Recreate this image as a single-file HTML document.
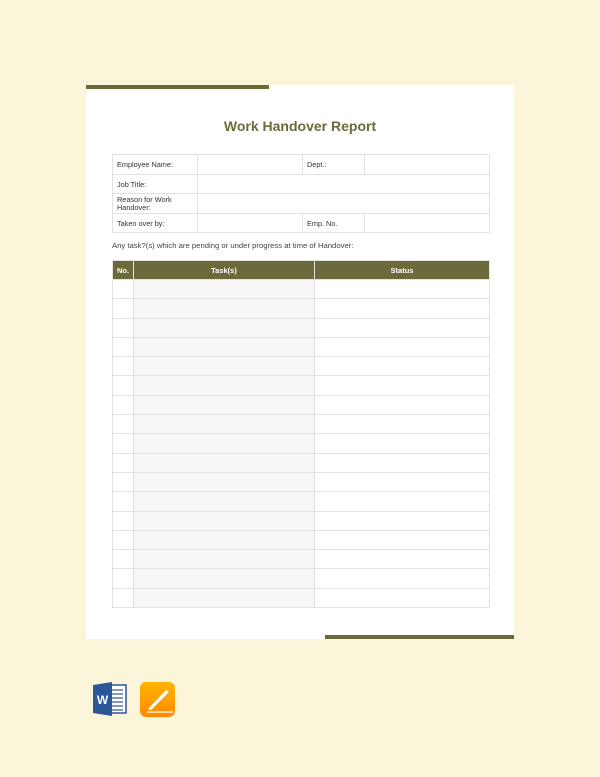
<!DOCTYPE html>
<html><head><style>
body{margin:0;width:600px;height:777px;background:#fbf6da;position:relative;font-family:"Liberation Sans",sans-serif;overflow:hidden}
.page{position:absolute;left:86px;top:85px;width:428px;height:554px;background:#fff}
.bar{position:absolute;background:#6b6a3a;height:4px}
h1{position:absolute;left:0;width:100%;top:118px;margin:0;text-align:center;font-size:14px;color:#6b6a3a;font-weight:bold}
table{border-collapse:collapse;position:absolute;font-size:7.3px;color:#333}
td{border:1px solid #e2e2e2;padding:0 4px;vertical-align:middle}
.t2 th{background:#6b6a3a;color:#fff;font-size:7.5px;border:1px solid #e2e2e2;height:18px;padding:0}
.t2 td{height:18.3px;padding:0}
.t2 td.g{background:#f6f6f6}
.note{position:absolute;left:112px;top:241px;font-size:7.7px;color:#444}
</style></head><body>
<div class="page"></div>
<div class="bar" style="left:86px;top:85px;width:183px"></div>
<div class="bar" style="left:325px;top:635px;width:189px"></div>
<h1>Work Handover Report</h1>
<table style="left:112px;top:154px;width:378px">
<tr style="height:20px"><td style="width:76px">Employee Name:</td><td style="width:96px"></td><td style="width:53px">Dept.:</td><td></td></tr>
<tr style="height:19px"><td>Job Title:</td><td colspan="3"></td></tr>
<tr style="height:20px"><td style="line-height:8px">Reason for Work Handover:</td><td colspan="3"></td></tr>
<tr style="height:19px"><td>Taken over by:</td><td></td><td>Emp. No.</td><td></td></tr>
</table>
<div class="note">Any task?(s) which are pending or under progress at time of Handover:</div>
<table class="t2" style="left:112px;top:260px;width:378px">
<tr><th style="width:20px">No.</th><th style="width:180px">Task(s)</th><th>Status</th></tr>
<tr><td></td><td class="g"></td><td></td></tr>
<tr><td></td><td class="g"></td><td></td></tr>
<tr><td></td><td class="g"></td><td></td></tr>
<tr><td></td><td class="g"></td><td></td></tr>
<tr><td></td><td class="g"></td><td></td></tr>
<tr><td></td><td class="g"></td><td></td></tr>
<tr><td></td><td class="g"></td><td></td></tr>
<tr><td></td><td class="g"></td><td></td></tr>
<tr><td></td><td class="g"></td><td></td></tr>
<tr><td></td><td class="g"></td><td></td></tr>
<tr><td></td><td class="g"></td><td></td></tr>
<tr><td></td><td class="g"></td><td></td></tr>
<tr><td></td><td class="g"></td><td></td></tr>
<tr><td></td><td class="g"></td><td></td></tr>
<tr><td></td><td class="g"></td><td></td></tr>
<tr><td></td><td class="g"></td><td></td></tr>
<tr><td></td><td class="g"></td><td></td></tr>
</table>
<svg style="position:absolute;left:92px;top:681px" width="36" height="36" viewBox="0 0 36 36">
<rect x="12" y="4" width="22" height="28" fill="#fff" stroke="#2b5797" stroke-width="1.5"/>
<g stroke="#2b5797" stroke-width="1.2"><line x1="20" y1="9" x2="31" y2="9"/><line x1="20" y1="13" x2="31" y2="13"/><line x1="20" y1="17" x2="31" y2="17"/><line x1="20" y1="21" x2="31" y2="21"/><line x1="20" y1="25" x2="31" y2="25"/><line x1="20" y1="29" x2="31" y2="29"/></g>
<path d="M1 4 L20 1 L20 35 L1 32Z" fill="#2b5797"/>
<text x="10.5" y="23" font-size="12" font-weight="bold" fill="#fff" text-anchor="middle" font-family="Liberation Sans">W</text>
</svg>
<svg style="position:absolute;left:140px;top:682px" width="35" height="35" viewBox="0 0 35 35">
<defs><linearGradient id="g" x1="0" y1="0" x2="0" y2="1"><stop offset="0" stop-color="#ffb400"/><stop offset="1" stop-color="#ff8a00"/></linearGradient></defs>
<rect width="35" height="35" rx="6" fill="url(#g)"/>
<path d="M8 27 L26 8 L29 10 L11 28Z" fill="#fff"/>
<line x1="7" y1="30" x2="33" y2="30" stroke="#fff" stroke-width="1.3"/>
</svg>
</body></html>
